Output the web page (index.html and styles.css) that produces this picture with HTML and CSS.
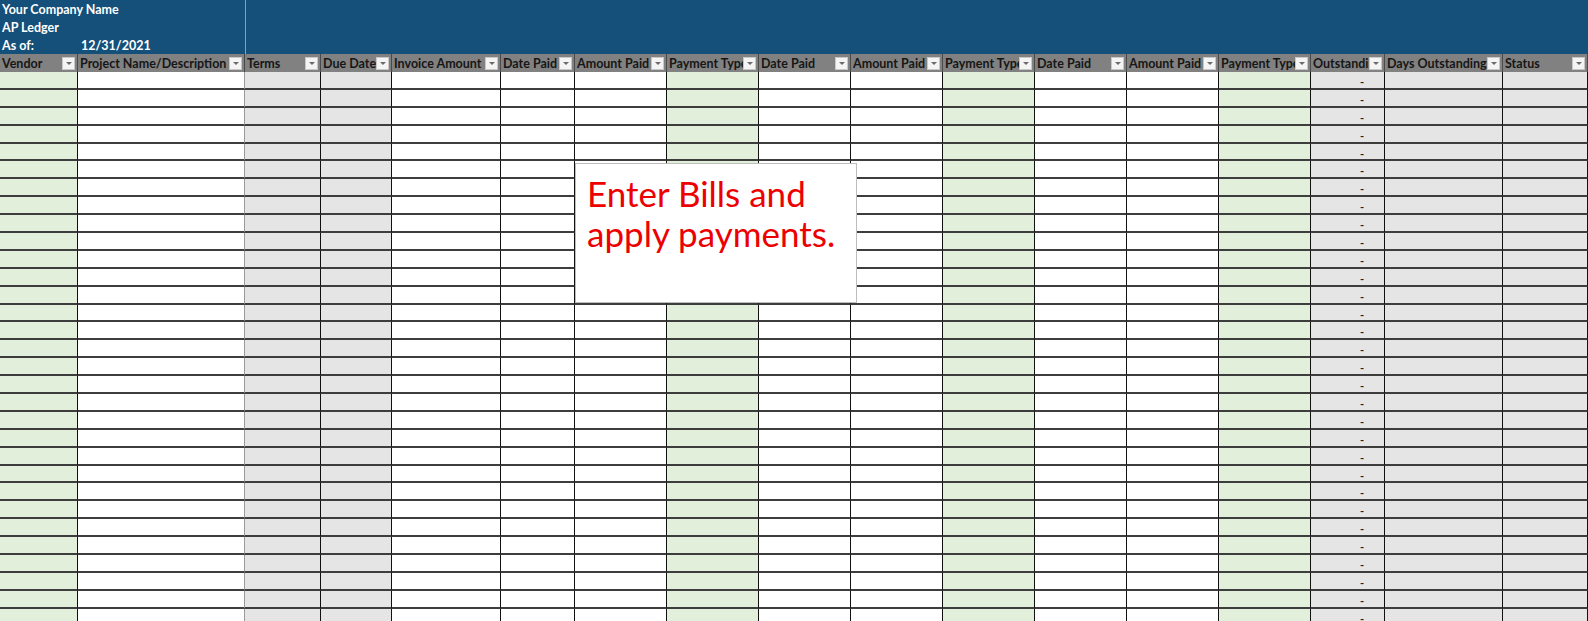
FILE: index.html
```html
<!DOCTYPE html>
<html lang="en">
<head>
<meta charset="utf-8">
<title>AP Ledger</title>
<link rel="stylesheet" href="styles.css">
</head>
<body>
<div class="sheet">
  <div class="banner">
    <div class="title">
      <div class="line">Your Company Name</div>
      <div class="line">AP Ledger</div>
      <div class="line asof"><span>As of:</span><span>12/31/2021</span></div>
    </div>
    <div class="banner-fill"></div>
  </div>

  <div class="row head">
    <div class="hc"><span>Vendor</span><b class="dd"></b></div>
    <div class="hc"><span>Project Name/Description</span><b class="dd"></b></div>
    <div class="hc"><span>Terms</span><b class="dd"></b></div>
    <div class="hc"><span>Due Date</span><b class="dd"></b></div>
    <div class="hc"><span>Invoice Amount</span><b class="dd"></b></div>
    <div class="hc"><span>Date Paid</span><b class="dd"></b></div>
    <div class="hc"><span>Amount Paid</span><b class="dd"></b></div>
    <div class="hc"><span>Payment Type</span><b class="dd"></b></div>
    <div class="hc"><span>Date Paid</span><b class="dd"></b></div>
    <div class="hc"><span>Amount Paid</span><b class="dd"></b></div>
    <div class="hc"><span>Payment Type</span><b class="dd"></b></div>
    <div class="hc"><span>Date Paid</span><b class="dd"></b></div>
    <div class="hc"><span>Amount Paid</span><b class="dd"></b></div>
    <div class="hc"><span>Payment Type</span><b class="dd"></b></div>
    <div class="hc"><span>Outstanding</span><b class="dd"></b></div>
    <div class="hc"><span>Days Outstanding</span><b class="dd"></b></div>
    <div class="hc"><span>Status</span><b class="dd"></b></div>
  </div>

  <div class="body">
    <div class="row"><span></span><span></span><span></span><span></span><span></span><span></span><span></span><span></span><span></span><span></span><span></span><span></span><span></span><span></span><span>-</span><span></span><span></span></div>
    <div class="row"><span></span><span></span><span></span><span></span><span></span><span></span><span></span><span></span><span></span><span></span><span></span><span></span><span></span><span></span><span>-</span><span></span><span></span></div>
    <div class="row"><span></span><span></span><span></span><span></span><span></span><span></span><span></span><span></span><span></span><span></span><span></span><span></span><span></span><span></span><span>-</span><span></span><span></span></div>
    <div class="row"><span></span><span></span><span></span><span></span><span></span><span></span><span></span><span></span><span></span><span></span><span></span><span></span><span></span><span></span><span>-</span><span></span><span></span></div>
    <div class="row"><span></span><span></span><span></span><span></span><span></span><span></span><span></span><span></span><span></span><span></span><span></span><span></span><span></span><span></span><span>-</span><span></span><span></span></div>
    <div class="row"><span></span><span></span><span></span><span></span><span></span><span></span><span></span><span></span><span></span><span></span><span></span><span></span><span></span><span></span><span>-</span><span></span><span></span></div>
    <div class="row"><span></span><span></span><span></span><span></span><span></span><span></span><span></span><span></span><span></span><span></span><span></span><span></span><span></span><span></span><span>-</span><span></span><span></span></div>
    <div class="row"><span></span><span></span><span></span><span></span><span></span><span></span><span></span><span></span><span></span><span></span><span></span><span></span><span></span><span></span><span>-</span><span></span><span></span></div>
    <div class="row"><span></span><span></span><span></span><span></span><span></span><span></span><span></span><span></span><span></span><span></span><span></span><span></span><span></span><span></span><span>-</span><span></span><span></span></div>
    <div class="row"><span></span><span></span><span></span><span></span><span></span><span></span><span></span><span></span><span></span><span></span><span></span><span></span><span></span><span></span><span>-</span><span></span><span></span></div>
    <div class="row"><span></span><span></span><span></span><span></span><span></span><span></span><span></span><span></span><span></span><span></span><span></span><span></span><span></span><span></span><span>-</span><span></span><span></span></div>
    <div class="row"><span></span><span></span><span></span><span></span><span></span><span></span><span></span><span></span><span></span><span></span><span></span><span></span><span></span><span></span><span>-</span><span></span><span></span></div>
    <div class="row"><span></span><span></span><span></span><span></span><span></span><span></span><span></span><span></span><span></span><span></span><span></span><span></span><span></span><span></span><span>-</span><span></span><span></span></div>
    <div class="row"><span></span><span></span><span></span><span></span><span></span><span></span><span></span><span></span><span></span><span></span><span></span><span></span><span></span><span></span><span>-</span><span></span><span></span></div>
    <div class="row"><span></span><span></span><span></span><span></span><span></span><span></span><span></span><span></span><span></span><span></span><span></span><span></span><span></span><span></span><span>-</span><span></span><span></span></div>
    <div class="row"><span></span><span></span><span></span><span></span><span></span><span></span><span></span><span></span><span></span><span></span><span></span><span></span><span></span><span></span><span>-</span><span></span><span></span></div>
    <div class="row"><span></span><span></span><span></span><span></span><span></span><span></span><span></span><span></span><span></span><span></span><span></span><span></span><span></span><span></span><span>-</span><span></span><span></span></div>
    <div class="row"><span></span><span></span><span></span><span></span><span></span><span></span><span></span><span></span><span></span><span></span><span></span><span></span><span></span><span></span><span>-</span><span></span><span></span></div>
    <div class="row"><span></span><span></span><span></span><span></span><span></span><span></span><span></span><span></span><span></span><span></span><span></span><span></span><span></span><span></span><span>-</span><span></span><span></span></div>
    <div class="row"><span></span><span></span><span></span><span></span><span></span><span></span><span></span><span></span><span></span><span></span><span></span><span></span><span></span><span></span><span>-</span><span></span><span></span></div>
    <div class="row"><span></span><span></span><span></span><span></span><span></span><span></span><span></span><span></span><span></span><span></span><span></span><span></span><span></span><span></span><span>-</span><span></span><span></span></div>
    <div class="row"><span></span><span></span><span></span><span></span><span></span><span></span><span></span><span></span><span></span><span></span><span></span><span></span><span></span><span></span><span>-</span><span></span><span></span></div>
    <div class="row"><span></span><span></span><span></span><span></span><span></span><span></span><span></span><span></span><span></span><span></span><span></span><span></span><span></span><span></span><span>-</span><span></span><span></span></div>
    <div class="row"><span></span><span></span><span></span><span></span><span></span><span></span><span></span><span></span><span></span><span></span><span></span><span></span><span></span><span></span><span>-</span><span></span><span></span></div>
    <div class="row"><span></span><span></span><span></span><span></span><span></span><span></span><span></span><span></span><span></span><span></span><span></span><span></span><span></span><span></span><span>-</span><span></span><span></span></div>
    <div class="row"><span></span><span></span><span></span><span></span><span></span><span></span><span></span><span></span><span></span><span></span><span></span><span></span><span></span><span></span><span>-</span><span></span><span></span></div>
    <div class="row"><span></span><span></span><span></span><span></span><span></span><span></span><span></span><span></span><span></span><span></span><span></span><span></span><span></span><span></span><span>-</span><span></span><span></span></div>
    <div class="row"><span></span><span></span><span></span><span></span><span></span><span></span><span></span><span></span><span></span><span></span><span></span><span></span><span></span><span></span><span>-</span><span></span><span></span></div>
    <div class="row"><span></span><span></span><span></span><span></span><span></span><span></span><span></span><span></span><span></span><span></span><span></span><span></span><span></span><span></span><span>-</span><span></span><span></span></div>
    <div class="row"><span></span><span></span><span></span><span></span><span></span><span></span><span></span><span></span><span></span><span></span><span></span><span></span><span></span><span></span><span>-</span><span></span><span></span></div>
    <div class="row"><span></span><span></span><span></span><span></span><span></span><span></span><span></span><span></span><span></span><span></span><span></span><span></span><span></span><span></span><span>-</span><span></span><span></span></div>
  </div>

  <div class="note">Enter Bills and apply payments.</div>
</div>
</body>
</html>
```

FILE: styles.css
```css
* { box-sizing: border-box; }

html, body {
  margin: 0;
  padding: 0;
  background: #ffffff;
}

body {
  width: 1588px;
  height: 621px;
  overflow: hidden;
  font-family: Lato, "Liberation Sans", sans-serif;
}

.sheet {
  position: relative;
  width: 1588px;
}

/* ---------- dark banner ---------- */
.banner {
  display: grid;
  grid-template-columns: 245px 1fr;
  height: 54px;
  background: #145079;
}

.title {
  display: grid;
  grid-template-rows: 18px 18px 18px;
  color: #ffffff;
  font-weight: 700;
  font-size: 12.5px;
  padding-left: 2px;
}

.line {
  padding-top: 2px;
  line-height: 16px;
  white-space: nowrap;
}

.asof {
  display: grid;
  grid-template-columns: 79px auto;
}

.banner-fill {
  border-left: 1px solid #7fa3bf;
}

/* ---------- grid rows ---------- */
.row {
  display: grid;
  grid-template-columns: 78px 167px 76px 71px 109px 74px 92px 92px 92px 92px 92px 92px 92px 92px 74px 118px 85px;
  grid-template-rows: 100%;
  height: 17.9px;
  overflow: hidden;
}

/* header */
.head {
  height: 18px;
  background: #818181;
}

.hc {
  display: flex;
  align-items: center;
  min-width: 0;
  overflow: hidden;
  border-right: 1px solid #4a4a4a;
  padding-left: 2px;
  padding-right: 2px;
  color: #161616;
  font-weight: 700;
  font-size: 12.5px;
  white-space: nowrap;
}

.hc span {
  flex: 1 1 auto;
  min-width: 0;
  overflow: hidden;
}

.dd {
  flex: 0 0 13px;
  height: 13px;
  background: #f4f4f4;
  border: 1px solid #c8c8c8;
  display: flex;
  align-items: center;
  justify-content: center;
}

.dd::after {
  content: "";
  border-left: 3px solid transparent;
  border-right: 3px solid transparent;
  border-top: 3px solid #6a6a6a;
}

/* body cells */
.body .row span {
  border-right: 1px solid #111111;
  border-bottom: 2px solid #3d3d3d;
  background: #ffffff;
}

/* column fills */
.body .row span:nth-child(1),
.body .row span:nth-child(8),
.body .row span:nth-child(11),
.body .row span:nth-child(14) {
  background: #e2efda;
}

.body .row span:nth-child(3),
.body .row span:nth-child(4),
.body .row span:nth-child(15),
.body .row span:nth-child(16),
.body .row span:nth-child(17) {
  background: #e5e5e5;
}

.body .row span:nth-child(2) {
  border-right-color: #9a9a9a;
}

.body .row span:nth-child(15) {
  text-align: right;
  padding-top: 5px;
  padding-right: 20px;
  font-size: 11px;
  font-weight: 700;
  line-height: 10px;
  color: #222222;
}

/* ---------- callout ---------- */
.note {
  position: absolute;
  left: 575px;
  top: 163px;
  width: 282px;
  height: 140px;
  background: #ffffff;
  border: 1px solid #bdbdbd;
  padding: 9px 8px 0 11px;
  color: #ec0000;
  font-size: 35px;
  line-height: 40px;
}
```
